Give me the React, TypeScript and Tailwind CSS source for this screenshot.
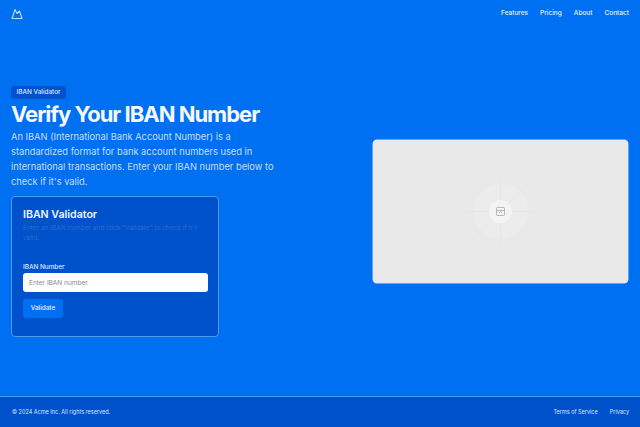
import { Mountain } from "lucide-react";

function Placeholder() {
  const cx = 127.5;
  const cy = 71.5;
  return (
    <div className="mb-[1px] h-[143px] w-[255px] rounded-[4px] bg-[#e9e9e9] shadow-[0_0_0_0.5px_#bfdbfe]">
      <svg width="255" height="143" viewBox="0 0 255 143" fill="none">
        <circle cx={cx} cy={cy} r="28" fill="#ececec" />
        <g stroke="#e5e5e5" strokeWidth="0.7">
          <path d={`M${cx} ${cy - 34}V${cy + 34}`} />
          <path d={`M${cx - 36} ${cy}H${cx + 36}`} />
          <path d={`M${cx - 28} ${cy + 28}L${cx + 28} ${cy - 28}`} />
        </g>
        <circle cx={cx} cy={cy} r="11.5" fill="#f4f4f4" />
        <g stroke="#a8a8a8" strokeWidth="0.8">
          <rect x={cx - 4} y={cy - 4} width="8" height="8" rx="0.8" />
          <path d={`M${cx - 4} ${cy - 1}H${cx + 4}M${cx - 1.5} ${cy + 1.5}L${cx} ${cy}L${cx + 1.5} ${cy + 1}`} />
        </g>
      </svg>
    </div>
  );
}

export default function App() {
  return (
    <div className="flex h-[427px] w-[640px] flex-col overflow-hidden bg-[#0070f3] font-['Inter',sans-serif] text-white">
      <header className="flex h-[27px] items-center justify-between pl-[11px] pr-[11px]">
        <Mountain className="h-3 w-3 text-[#bfdbfe]" strokeWidth={2.2} />
        <nav className="flex gap-3 text-[6.5px] font-medium text-[#e6f1ff]">
          <span>Features</span>
          <span>Pricing</span>
          <span>About</span>
          <span>Contact</span>
        </nav>
      </header>

      <main className="flex flex-1 items-center justify-between pl-[11px] pr-[12px]">
        <div className="flex w-[272px] flex-col items-start">
          <span className="rounded-[3px] bg-[#0052cc] px-[5.5px] py-[2px] text-[6.4px] leading-[9px] font-medium text-[#dbeafe]">
            IBAN Validator
          </span>
          <h1 className="mt-[3px] text-[22px] leading-[24px] font-bold tracking-[-1px] whitespace-nowrap text-[#f5f9ff]">
            Verify Your IBAN Number
          </h1>
          <p className="mt-[3px] w-[272px] text-[9.3px] leading-[15px] text-[#c5defc]">
            An IBAN (International Bank Account Number) is a standardized format for bank account numbers used in international transactions. Enter your IBAN number below to check if it's valid.
          </p>
          <div className="mt-[7px] flex h-[141px] w-[208px] flex-col rounded-[4px] border border-[#4d9bf5] bg-[#0052cc] px-[11px] pt-[11px]">
            <h2 className="text-[10.6px] leading-[14px] font-semibold text-[#f0f6ff]">IBAN Validator</h2>
            <p className="mt-[1px] text-[6.5px] leading-[10px] text-[#2b6bc9]">
              Enter an IBAN number and click "Validate" to check if it's valid.
            </p>
            <label className="mt-[20px] text-[6.4px] leading-[8px] font-medium text-[#dbeafe]">IBAN Number</label>
            <input
              className="mt-[2px] h-[19px] w-[185px] rounded-[3px] bg-white px-[6px] text-[6.5px] text-[#333] outline-none placeholder:text-[#8a8a8a]"
              placeholder="Enter IBAN number"
            />
            <button className="mt-[7px] h-[19px] w-[40px] rounded-[3px] bg-[#0070f3] text-[6.4px] font-medium text-[#e6f1ff]">
              Validate
            </button>
          </div>
        </div>
        <Placeholder />
      </main>

      <footer className="flex h-[31px] items-center justify-between border-t border-[#4d9bf5] bg-[#0052cc] pl-3 pr-[11px] text-[5.5px] text-[#d6e6fb]">
        <span>© 2024 Acme Inc. All rights reserved.</span>
        <div className="flex gap-3">
          <span>Terms of Service</span>
          <span>Privacy</span>
        </div>
      </footer>
    </div>
  );
}
